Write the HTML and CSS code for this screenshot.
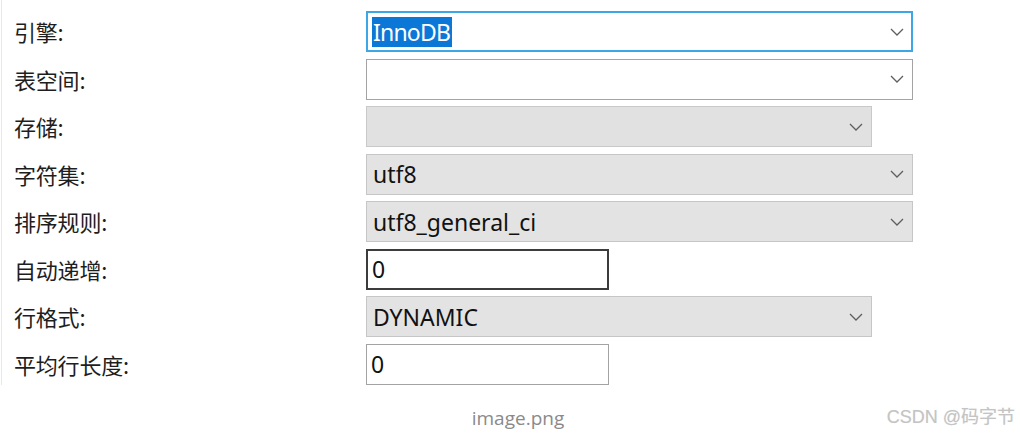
FILE: index.html
```html
<!DOCTYPE html>
<html lang="zh">
<head>
<meta charset="utf-8">
<link rel="stylesheet" href="styles.css">
</head>
<body>
<div class="page">
  <div class="panel">
    <div class="row">
      <div class="label">引擎:</div>
      <div class="field wide focus"><span class="sel">InnoDB</span><svg class="chev" viewBox="0 0 14 8"><polyline points="1,1 7,7 13,1"/></svg></div>
    </div>
    <div class="row">
      <div class="label">表空间:</div>
      <div class="field wide plain"><span></span><svg class="chev" viewBox="0 0 14 8"><polyline points="1,1 7,7 13,1"/></svg></div>
    </div>
    <div class="row">
      <div class="label">存储:</div>
      <div class="field mid disabled"><span></span><svg class="chev" viewBox="0 0 14 8"><polyline points="1,1 7,7 13,1"/></svg></div>
    </div>
    <div class="row">
      <div class="label">字符集:</div>
      <div class="field wide grey"><span>utf8</span><svg class="chev" viewBox="0 0 14 8"><polyline points="1,1 7,7 13,1"/></svg></div>
    </div>
    <div class="row">
      <div class="label">排序规则:</div>
      <div class="field wide grey"><span>utf8_general_ci</span><svg class="chev" viewBox="0 0 14 8"><polyline points="1,1 7,7 13,1"/></svg></div>
    </div>
    <div class="row">
      <div class="label">自动递增:</div>
      <div class="field short input dark"><span>0</span></div>
    </div>
    <div class="row">
      <div class="label">行格式:</div>
      <div class="field mid grey"><span>DYNAMIC</span><svg class="chev" viewBox="0 0 14 8"><polyline points="1,1 7,7 13,1"/></svg></div>
    </div>
    <div class="row">
      <div class="label">平均行长度:</div>
      <div class="field short input plain"><span>0</span></div>
    </div>
  </div>
  <div class="caption">image.png</div>
  <div class="watermark">CSDN @码字节</div>
</div>
</body>
</html>
```
FILE: styles.css
```css
html, body {
  margin: 0;
  padding: 0;
  background: #ffffff;
}
.page {
  width: 1020px;
  height: 435px;
  position: relative;
  overflow: hidden;
}
.panel {
  margin-left: 1px;
  border-left: 1px solid #e8e8e8;
  height: 374px;
  padding-top: 11px;
  display: flex;
  flex-direction: column;
}
.row {
  height: 47.5px;
  display: flex;
  align-items: flex-start;
  flex: none;
}
.label {
  width: 364px;
  padding-left: 12px;
  height: 41px;
  line-height: 41px;
  font-family: "Noto Sans CJK SC", "Microsoft YaHei", sans-serif;
  font-size: 22px;
  color: #1e1e1e;
  box-sizing: border-box;
  letter-spacing: -0.2px;
}
.field {
  box-sizing: border-box;
  height: 41px;
  display: flex;
  align-items: center;
  justify-content: space-between;
  padding: 0 8px 0 5px;
  font-family: "Noto Sans", "Open Sans", sans-serif;
  font-size: 23px;
  color: #111;
  border: 1px solid #a0a0a0;
  background: #fff;
}
.field span {
  line-height: 30px;
  padding: 0 1px;
}
.wide { width: 547px; }
.mid { width: 506px; }
.short { width: 243px; }
.focus {
  border: 2px solid #3ea6e6;
  padding-left: 4px;
  padding-right: 7px;
}
.focus .sel {
  letter-spacing: -0.8px;
  padding-right: 2px;
}
.plain { border-color: #a3a3a3; }
.disabled {
  background: #e1e1e1;
  border-color: #c9c9c9;
}
.grey {
  background: #e3e3e3;
  border-color: #c6c6c6;
}
.dark {
  border: 2px solid #3c3c3c;
  padding-left: 3px;
}
.input span { padding: 0; }
.input { padding-left: 4px; }
.sel {
  background: #0b78d7;
  color: #ffffff;
}
.chev {
  width: 14px;
  height: 8px;
  flex: none;
}
.chev polyline {
  fill: none;
  stroke: #5e5e5e;
  stroke-width: 1.3;
}
.caption {
  text-align: center;
  font-family: "Open Sans", "Noto Sans", sans-serif;
  font-size: 19px;
  color: #8a8a8a;
  margin-top: 20px;
  padding-left: 16px;
}
.watermark {
  position: absolute;
  right: 5px;
  top: 402px;
  font-family: "Liberation Sans", "Noto Sans CJK SC", sans-serif;
  font-size: 18px;
  color: #c4c4c4;
  text-shadow: 0 0 1px #e6e6e6;
}
```
